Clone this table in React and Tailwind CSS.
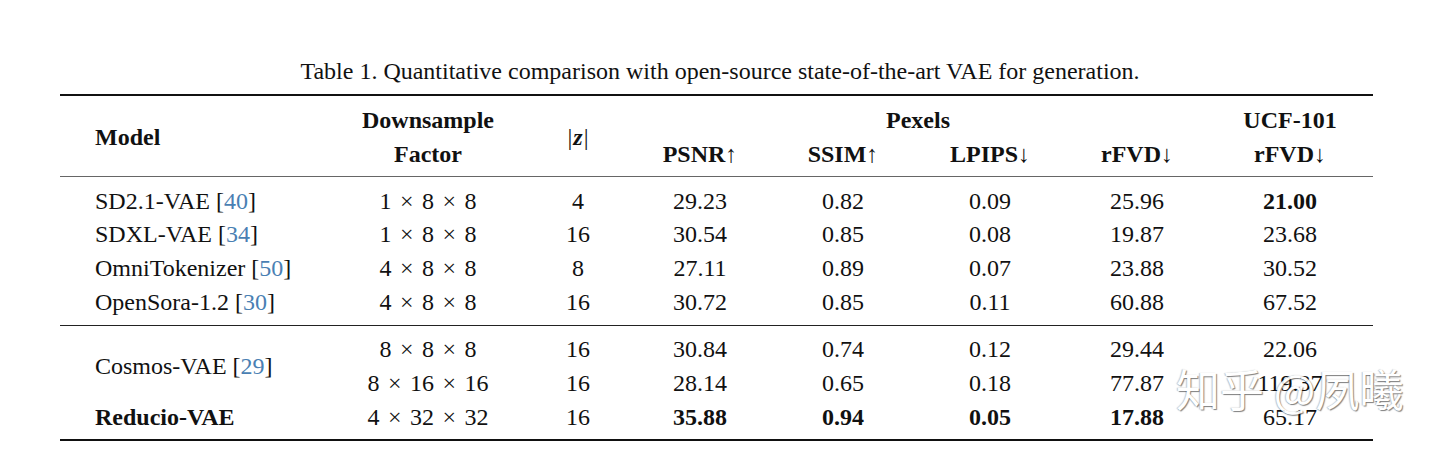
import React from "react";

const cols = "grid grid-cols-[293px_150px_150px_94px_192px_102px_192px_114px_26px]";
const sub = "grid grid-cols-[150px_150px_94px_192px_102px_192px_114px] h-[34px] items-center";

function Cite({ n }) {
  return (
    <>
      {" "}[<span className="text-[#4a7fb3]">{n}</span>]
    </>
  );
}

function Dims({ a, b, c }) {
  return (
    <span className="whitespace-nowrap">
      {a}
      <span className="px-[8.5px]">×</span>
      {b}
      <span className="px-[8.5px]">×</span>
      {c}
    </span>
  );
}

function Row({ name, ds, z, vals, boldIdx = [] }) {
  return (
    <div className={`${cols} h-[33.67px] items-center`}>
      <div className="pl-[35px] whitespace-nowrap">{name}</div>
      <div className="text-center whitespace-nowrap">{ds}</div>
      <div className="text-center">{z}</div>
      {vals.map((v, i) => (
        <div key={i} className={`text-center ${boldIdx.includes(i) ? "font-bold" : ""}`}>
          {v}
        </div>
      ))}
    </div>
  );
}

export default function App() {
  return (
    <div className="relative w-[1440px] h-[453px] bg-white overflow-hidden [font-family:'Liberation_Serif','Times_New_Roman',serif] text-[24px] text-[#111] leading-none">
      <div className="pt-[58px] text-center leading-[26px]">
        Table 1. Quantitative comparison with open-source state-of-the-art VAE for generation.
      </div>
      <div className="ml-[60px] w-[1313px] mt-[10px] border-t-2 border-b-2 border-[#111]">
        {/* header */}
        <div className={`${cols} grid-rows-[34px_34px] pt-[7px] pb-[5px] border-b border-[#666]`}>
          <div className="row-span-2 flex items-center pl-[35px] font-bold">Model</div>
          <div className="flex items-center justify-center font-bold">Downsample</div>
          <div className="row-span-2 flex items-center justify-center">
            |<span className="italic font-bold px-[1px]">z</span>|
          </div>
          <div className="col-span-4 flex items-center justify-center pr-[50px] font-bold">Pexels</div>
          <div className="flex items-center justify-center font-bold">UCF-101</div>
          <div />
          <div className="flex items-center justify-center font-bold col-start-2 row-start-2">Factor</div>
          <div className="flex items-center justify-center col-start-4 row-start-2">
            <span className="font-bold">PSNR</span>↑
          </div>
          <div className="flex items-center justify-center col-start-5 row-start-2">
            <span className="font-bold">SSIM</span>↑
          </div>
          <div className="flex items-center justify-center col-start-6 row-start-2">
            <span className="font-bold">LPIPS</span>↓
          </div>
          <div className="flex items-center justify-center col-start-7 row-start-2">
            <span className="font-bold">rFVD</span>↓
          </div>
          <div className="flex items-center justify-center col-start-8 row-start-2">
            <span className="font-bold">rFVD</span>↓
          </div>
        </div>
        {/* group 1 */}
        <div className="pt-[7px] pb-[6px] border-b-[1.5px] border-[#222]">
          <Row
            name={<>SD2.1-VAE<Cite n="40" /></>}
            ds={<Dims a="1" b="8" c="8" />}
            z="4"
            vals={["29.23", "0.82", "0.09", "25.96", "21.00"]}
            boldIdx={[4]}
          />
          <Row
            name={<>SDXL-VAE<Cite n="34" /></>}
            ds={<Dims a="1" b="8" c="8" />}
            z="16"
            vals={["30.54", "0.85", "0.08", "19.87", "23.68"]}
          />
          <Row
            name={<>OmniTokenizer<Cite n="50" /></>}
            ds={<Dims a="4" b="8" c="8" />}
            z="8"
            vals={["27.11", "0.89", "0.07", "23.88", "30.52"]}
          />
          <Row
            name={<>OpenSora-1.2<Cite n="30" /></>}
            ds={<Dims a="4" b="8" c="8" />}
            z="16"
            vals={["30.72", "0.85", "0.11", "60.88", "67.52"]}
          />
        </div>
        {/* group 2 */}
        <div className="pt-[6px] pb-[5px]">
          <div className="flex">
            <div className="w-[293px] shrink-0 flex items-center pl-[35px] whitespace-nowrap">
              Cosmos-VAE<Cite n="29" />
            </div>
            <div className="flex flex-col">
              <div className={sub}>
                <div className="text-center"><Dims a="8" b="8" c="8" /></div>
                <div className="text-center">16</div>
                <div className="text-center">30.84</div>
                <div className="text-center">0.74</div>
                <div className="text-center">0.12</div>
                <div className="text-center">29.44</div>
                <div className="text-center">22.06</div>
              </div>
              <div className={sub}>
                <div className="text-center"><Dims a="8" b="16" c="16" /></div>
                <div className="text-center">16</div>
                <div className="text-center">28.14</div>
                <div className="text-center">0.65</div>
                <div className="text-center">0.18</div>
                <div className="text-center">77.87</div>
                <div className="text-center">119.37</div>
              </div>
            </div>
          </div>
          <div className={`${cols} h-[34px] items-center`}>
            <div className="pl-[35px] font-bold whitespace-nowrap">Reducio-VAE</div>
            <div className="text-center"><Dims a="4" b="32" c="32" /></div>
            <div className="text-center">16</div>
            <div className="text-center font-bold">35.88</div>
            <div className="text-center font-bold">0.94</div>
            <div className="text-center font-bold">0.05</div>
            <div className="text-center font-bold">17.88</div>
            <div className="text-center">65.17</div>
          </div>
        </div>
      </div>
      <div className="absolute left-[1176px] top-[366px] text-[44px] leading-none text-white [font-family:'Noto_Sans_CJK_SC',sans-serif] [text-shadow:1px_1px_1px_rgba(0,0,0,0.55),-1px_0_1px_rgba(0,0,0,0.25)] opacity-90 whitespace-nowrap">
        知乎 @夙曦
      </div>
    </div>
  );
}
